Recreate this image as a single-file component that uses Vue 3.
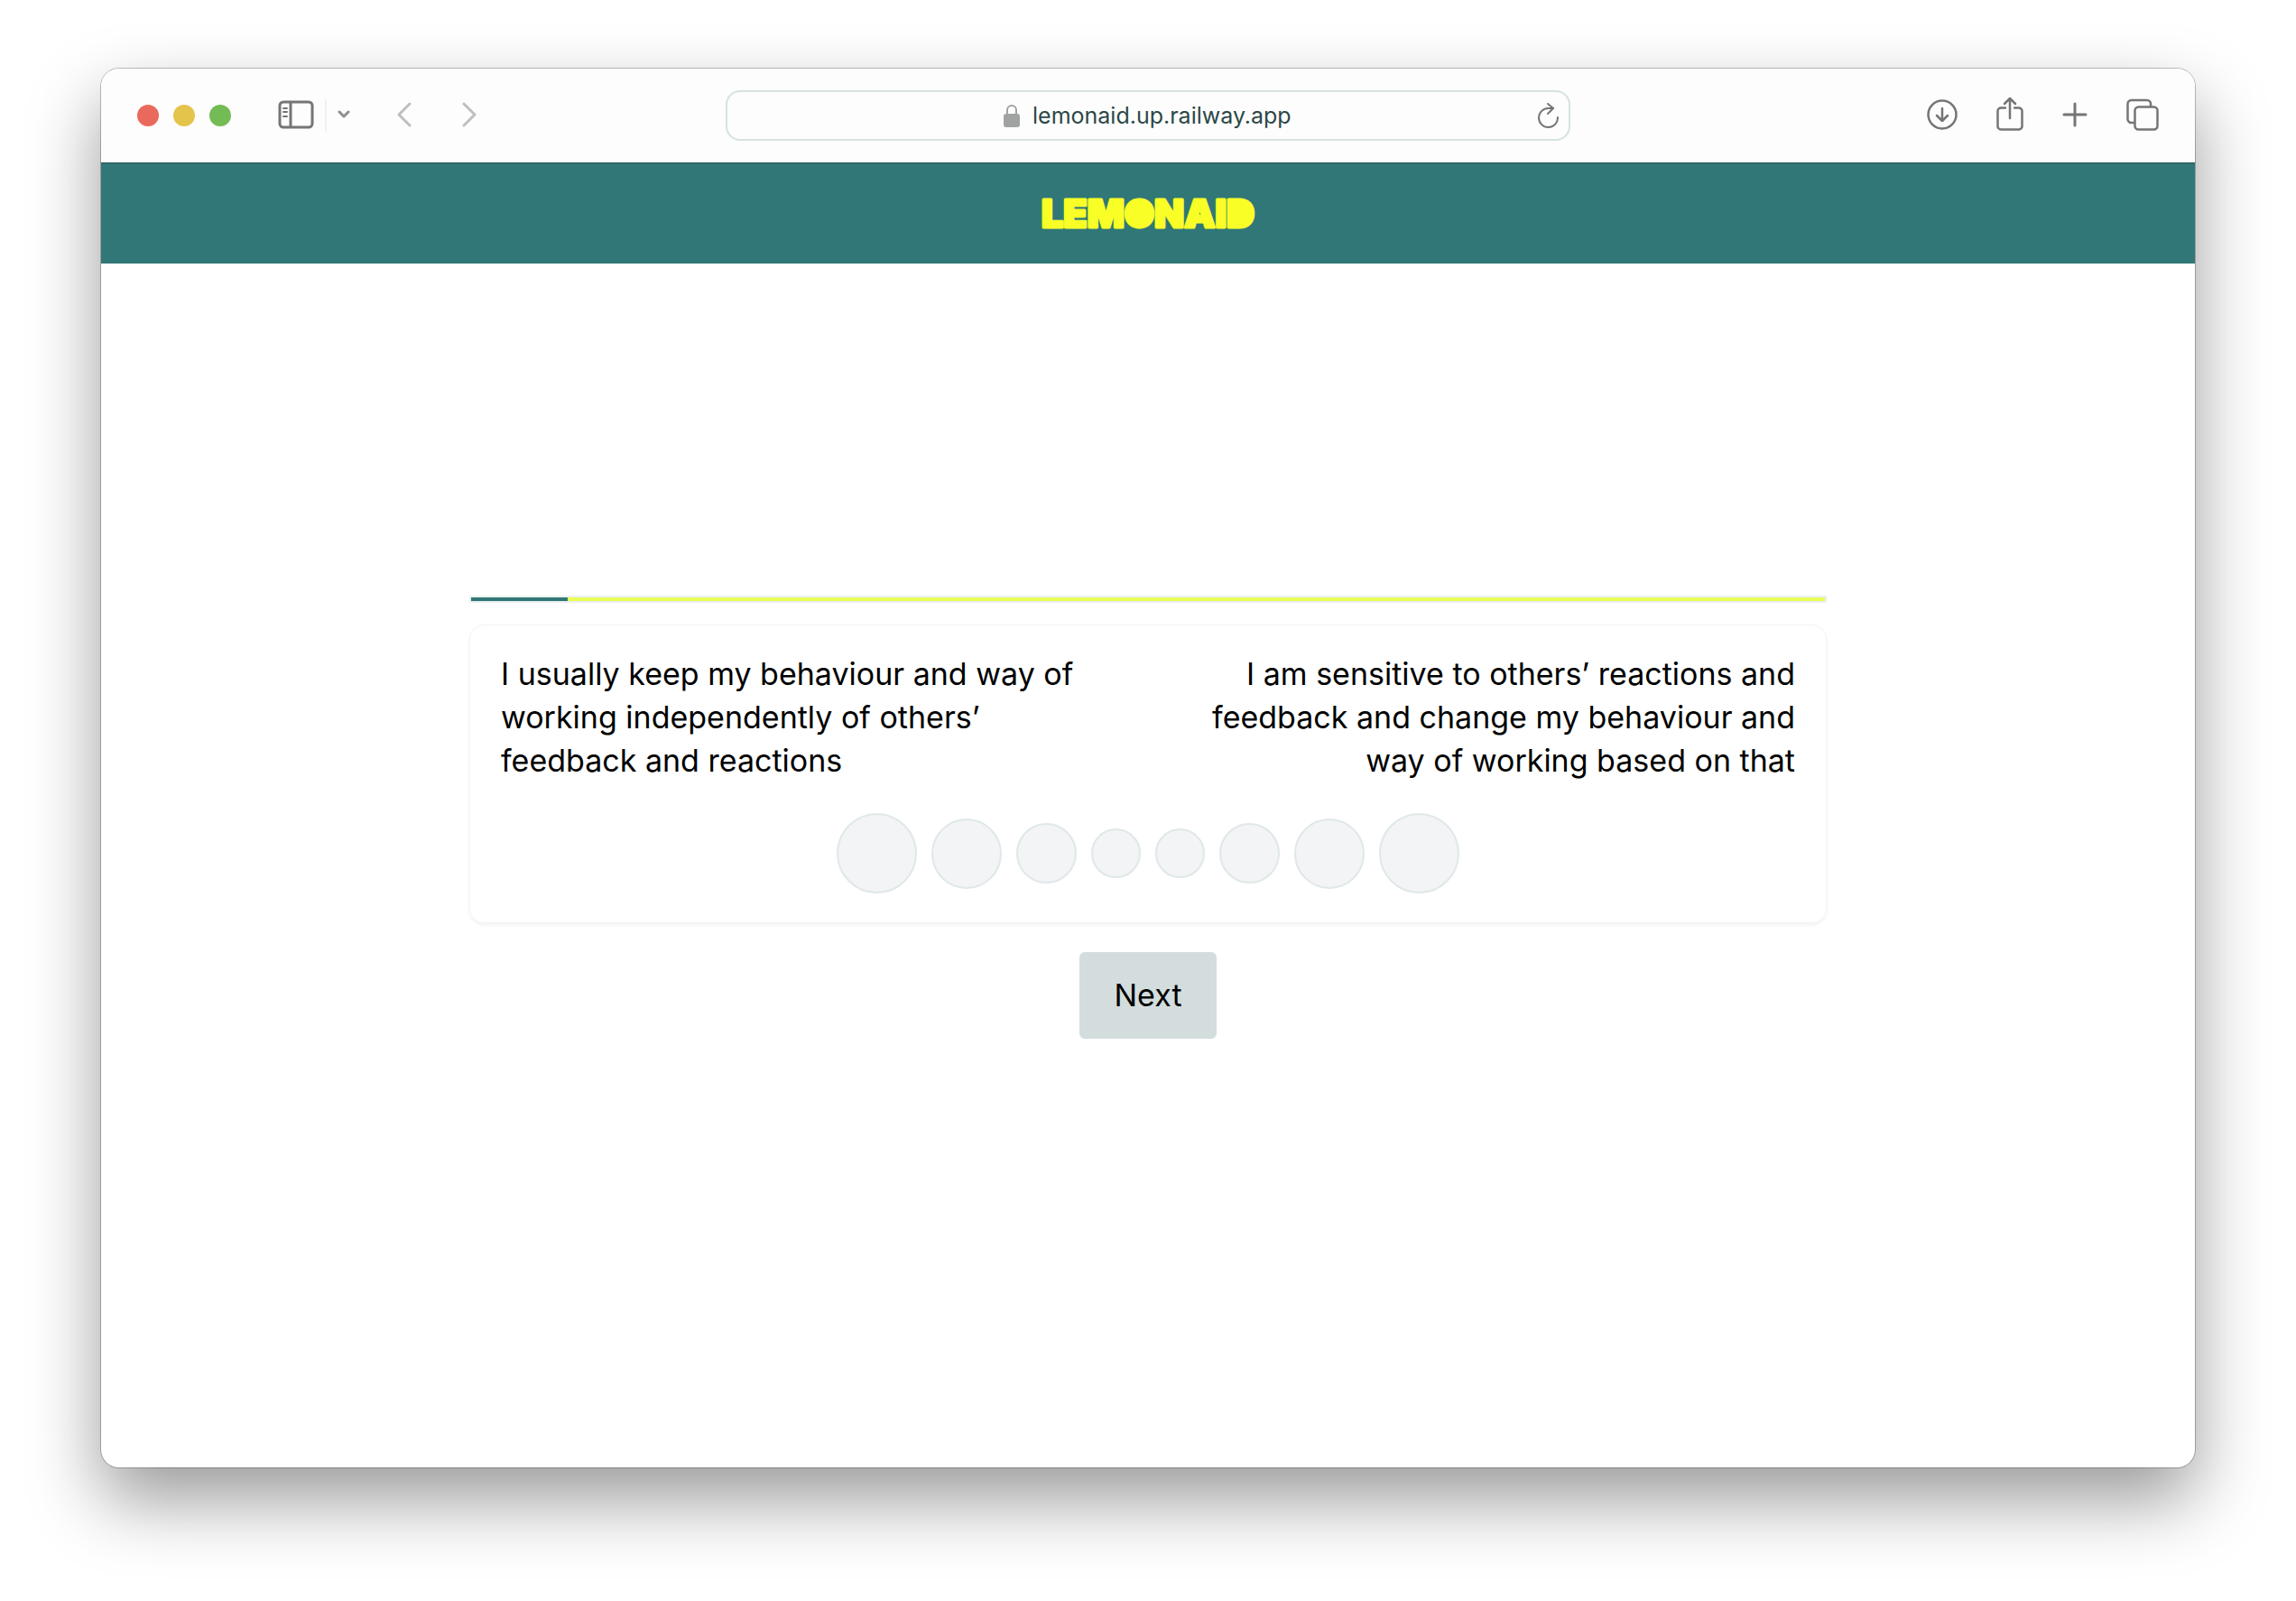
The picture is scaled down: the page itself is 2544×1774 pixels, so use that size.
<template>
  <div class="desktop">
    <div class="window">
      <header class="toolbar">
        <div class="tools">
          <div class="lights">
            <button class="light red" aria-label="Close"></button>
            <button class="light yellow" aria-label="Minimise"></button>
            <button class="light green" aria-label="Zoom"></button>
          </div>
          <div class="sidebar-tools">
            <button class="icon-btn" aria-label="Sidebar">
              <svg width="40" height="32" viewBox="0 0 40 32" fill="none" stroke="#757575" stroke-width="3">
                <rect x="2" y="2" width="36" height="28" rx="4" />
                <path d="M14 2v28" />
                <path d="M6 9h4M6 13h4M6 18h4" stroke-width="2" stroke-linecap="round" />
              </svg>
            </button>
            <span class="divider"></span>
            <button class="icon-btn" aria-label="Tab groups">
              <svg width="14" height="10" viewBox="0 0 14 10" fill="none" stroke="#8c8f8f" stroke-width="3" stroke-linecap="round" stroke-linejoin="round">
                <path d="M2 2l5 5 5-5" />
              </svg>
            </button>
          </div>
          <div class="history">
            <button class="icon-btn" aria-label="Back">
              <svg width="16" height="28" viewBox="0 0 16 28" fill="none" stroke="#bfbfbf" stroke-width="3" stroke-linecap="round" stroke-linejoin="round">
                <path d="M14 2L2 14l12 12" />
              </svg>
            </button>
            <button class="icon-btn" aria-label="Forward">
              <svg width="16" height="28" viewBox="0 0 16 28" fill="none" stroke="#bfbfbf" stroke-width="3" stroke-linecap="round" stroke-linejoin="round">
                <path d="M2 2l12 12L2 26" />
              </svg>
            </button>
          </div>
        </div>

        <div class="address">
          <svg width="18" height="26" viewBox="0 0 18 26">
            <path d="M4 12V7a5 5 0 0 1 10 0v5" fill="none" stroke="#a0a3a2" stroke-width="2" />
            <rect x="0" y="11" width="18" height="15" rx="3" fill="#a0a3a2" />
          </svg>
          <input v-model="url" class="url" type="text" aria-label="Address" />
          <button class="reload" aria-label="Reload">
            <svg width="24" height="30" viewBox="0 0 24 30" fill="none" stroke="#757575" stroke-width="2" stroke-linecap="round" stroke-linejoin="round">
              <path d="M22 17A10.500 10.500 0 1 1 11.500 7H17" />
              <path d="M11 2l6 5-6 6" />
            </svg>
          </button>
        </div>

        <div class="actions">
          <button class="icon-btn" aria-label="Downloads">
            <svg width="34" height="34" viewBox="0 0 34 34" fill="none" stroke="#757575" stroke-width="2.500" stroke-linecap="round" stroke-linejoin="round">
              <circle cx="17" cy="17" r="15.500" />
              <path d="M17 10v14M11 18l6 6 6-6" />
            </svg>
          </button>
          <button class="icon-btn" aria-label="Share">
            <svg width="30" height="40" viewBox="0 0 30 40" fill="none" stroke="#757575" stroke-width="2.500" stroke-linecap="round" stroke-linejoin="round">
              <path d="M10 12.500H5a3.500 3.500 0 0 0-3.500 3.500v17A3.500 3.500 0 0 0 5 36.500h20a3.500 3.500 0 0 0 3.500-3.500V16a3.500 3.500 0 0 0-3.500-3.500h-5" />
              <path d="M15 24V2M9 8l6-6 6 6" />
            </svg>
          </button>
          <button class="icon-btn" aria-label="New tab">
            <svg width="28" height="28" viewBox="0 0 28 28" fill="none" stroke="#757575" stroke-width="3" stroke-linecap="round">
              <path d="M14 2v24M2 14h24" />
            </svg>
          </button>
          <button class="icon-btn" aria-label="Tab overview">
            <svg width="36" height="36" viewBox="0 0 36 36" fill="none" stroke="#757575" stroke-width="2.500" stroke-linejoin="round">
              <path d="M9 27H5.500A4 4 0 0 1 1.500 23V6A4 4 0 0 1 5.500 2H23A4 4 0 0 1 27 6V9" />
              <rect x="9.500" y="9.500" width="25" height="25" rx="4" />
            </svg>
          </button>
        </div>
      </header>

      <div class="brand">
        <svg class="logo" width="264" height="64" viewBox="0 0 264 64" role="img" aria-label="Lemonaid">
          <text x="132" y="47" text-anchor="middle">LEMONAID</text>
          <!-- solid counters -->
          <circle cx="120" cy="31" r="11" />
          <circle cx="185" cy="35" r="5" />
          <ellipse cx="233" cy="31" rx="7" ry="10" />
        </svg>
      </div>

      <main class="survey">
        <div class="progress" role="progressbar" :aria-valuenow="step" aria-valuemin="0" :aria-valuemax="total">
          <div class="progress-fill" :style="{ width: (step / total) * 100 + '%' }"></div>
        </div>

        <form class="question" @submit.prevent="next">
          <div class="card">
            <div class="statements">
              <p>I usually keep my behaviour and way of working independently of others’ feedback and reactions</p>
              <p class="right">I am sensitive to others’ reactions and feedback and change my behaviour and way of working based on that</p>
            </div>
            <div class="scale">
              <input
                v-for="(size, i) in sizes"
                :key="i"
                v-model="answer"
                type="radio"
                name="answer"
                :value="i + 1"
                :class="['dot', size]"
                :aria-label="'Option ' + (i + 1)"
              />
            </div>
          </div>
          <button class="next" type="submit">Next</button>
        </form>
      </main>
    </div>
  </div>
</template>

<script setup>
import { ref } from 'vue'

const url = ref('lemonaid.up.railway.app')
const sizes = ['xl', 'lg', 'md', 'sm', 'sm', 'md', 'lg', 'xl']
const total = 14
const step = ref(1)
const answer = ref(null)

const next = () => {
  if (answer.value === null || step.value >= total) return
  step.value++
  answer.value = null
}
</script>

<style>
body {
  background: #fff;
}
</style>

<style scoped>
* {
  box-sizing: border-box;
}

button {
  border: none;
  padding: 0;
  cursor: pointer;
}

.desktop {
  display: flex;
  min-height: 100vh;
  padding: 76px 112px 148px;
  font-family: Inter, "Liberation Sans", sans-serif;
}

.window {
  flex: 1;
  display: flex;
  flex-direction: column;
  min-width: 0;
  overflow: hidden;
  border-radius: 20px;
  background: #fff;
  box-shadow: 0 0 0 1px rgba(0, 0, 0, 0.24), 0 36px 80px rgba(0, 0, 0, 0.4);
}

.toolbar {
  display: grid;
  grid-template-columns: 1fr minmax(400px, 936px) 1fr;
  align-items: center;
  height: 104px;
  padding: 0 40px;
  background: #fdfdfd;
}

.tools,
.lights,
.sidebar-tools,
.history,
.actions {
  display: flex;
  align-items: center;
}

.tools {
  gap: 52px;
}

.lights {
  gap: 16px;
}

.light {
  width: 24px;
  height: 24px;
  border-radius: 50%;
}

.red {
  background: #ea695d;
}

.yellow {
  background: #e5c44c;
}

.green {
  background: #73bb54;
}

.sidebar-tools {
  gap: 12px;
}

.divider {
  width: 2px;
  height: 36px;
  background: #f1f1f1;
}

.history {
  gap: 56px;
}

.actions {
  justify-content: flex-end;
  gap: 43px;
}

.icon-btn {
  display: flex;
  margin-bottom: 2px;
  background: none;
}

.address {
  position: relative;
  display: flex;
  align-items: center;
  justify-content: center;
  gap: 14px;
  height: 56px;
  border: 2px solid #d5e2e1;
  border-radius: 16px;
}

.url {
  width: 288px;
  padding: 0;
  border: none;
  outline: none;
  background: none;
  color: #2c4747;
  font-family: inherit;
  font-size: 25px;
}

.reload {
  position: absolute;
  right: 10px;
  display: flex;
  background: none;
}

.brand {
  display: flex;
  align-items: center;
  justify-content: center;
  height: 112px;
  border-top: 1px solid #28504f;
  background: #317777;
}

.logo {
  fill: #f9ff26;
}

.logo text {
  stroke: #f9ff26;
  stroke-width: 3px;
  stroke-linejoin: round;
  font-size: 43px;
  font-weight: 900;
}

.survey {
  width: 100%;
  max-width: 1504px;
  margin: 0 auto;
  padding: 368px 0 64px;
}

.progress {
  height: 8px;
  margin-bottom: 24px;
  border: 2px solid #eaf0f0;
  background: #e7ff52;
}

.progress-fill {
  height: 100%;
  background: #317777;
}

.question {
  display: flex;
  flex-direction: column;
  align-items: center;
  gap: 32px;
  color: #000;
  font-size: 34px;
  line-height: 48px;
}

.card {
  width: 100%;
  padding: 30px 34px 32px;
  border: 1px solid #f4f4f4;
  border-radius: 16px;
  box-shadow: 0 2px 4px rgba(0, 0, 0, 0.06);
}

.statements {
  display: grid;
  grid-template-columns: 1fr 1fr;
  gap: 96px;
  margin-bottom: 34px;
}

.statements p {
  margin: 0;
}

.right {
  text-align: right;
}

.scale {
  display: flex;
  align-items: center;
  justify-content: center;
  gap: 16px;
}

.dot {
  appearance: none;
  flex: none;
  margin: 0;
  border: 2px solid #dfe8e8;
  border-radius: 50%;
  background: #f3f4f6;
  cursor: pointer;
}

.dot:checked {
  border-color: #317777;
  background: #317777;
}

.xl {
  width: 89px;
  height: 89px;
}

.lg {
  width: 78px;
  height: 78px;
}

.md {
  width: 67px;
  height: 67px;
}

.sm {
  width: 55px;
  height: 55px;
}

.next {
  padding: 24px 38px;
  border-radius: 6px;
  background: #d3dddd;
  color: #000;
  font: inherit;
}
</style>
